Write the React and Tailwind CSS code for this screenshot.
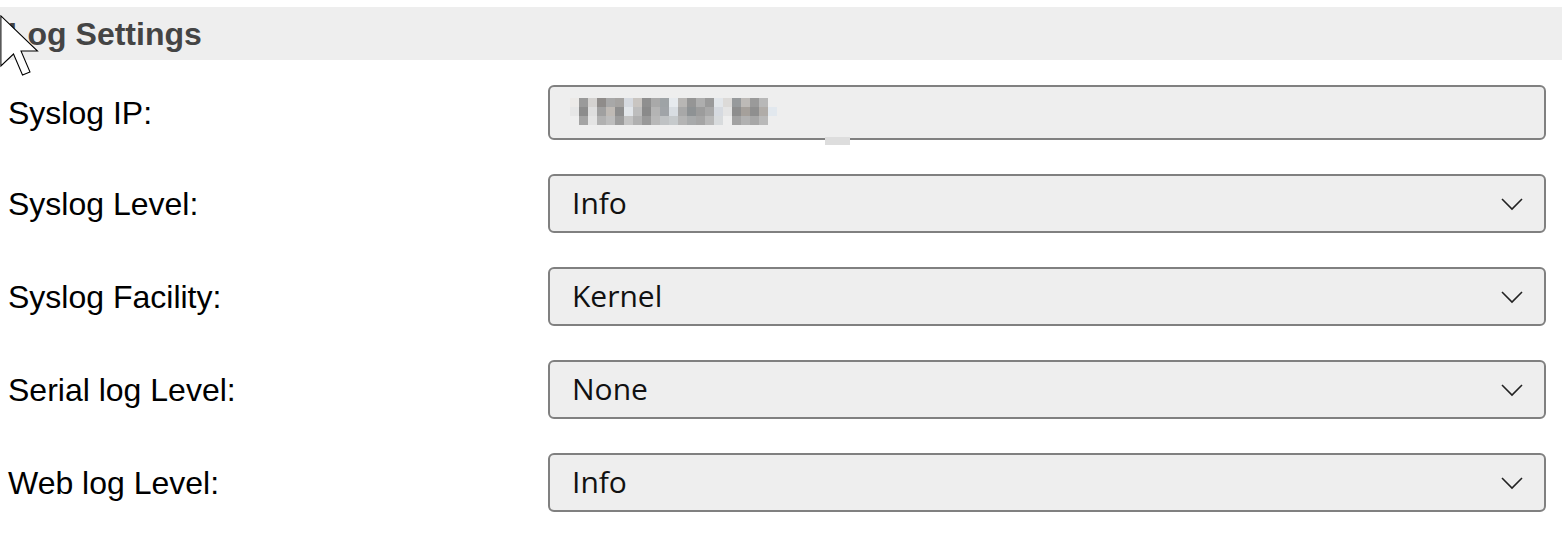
import { useState } from 'react';

const rows = [
  { label: 'Syslog Level:', value: 'Info', options: ['None', 'Error', 'Warning', 'Info', 'Debug'] },
  { label: 'Syslog Facility:', value: 'Kernel', options: ['Kernel', 'User', 'Daemon', 'Local0'] },
  { label: 'Serial log Level:', value: 'None', options: ['None', 'Error', 'Warning', 'Info', 'Debug'] },
  { label: 'Web log Level:', value: 'Info', options: ['None', 'Error', 'Warning', 'Info', 'Debug'] },
];

// pixelated (blurred) ip address
const shades = [
  ['#eceae8', '#9a9a9a', '#d4d2d0', '#8f8c8a', '#a8a8a8', '#a5a3a1', '#d6dae0', '#c9c5c1', '#8f8f8f', '#a9a9a9', '#9ea3a6', '#e6eaee', '#b8b6b4', '#959595', '#aeaeae', '#9a9a9a', '#e2e6ea', '#dcdad8', '#979a9c', '#bdbab7', '#9a9a9a', '#b8b8b8', '#eeeeee'],
  ['#e6e6e6', '#8c8c8c', '#dedede', '#a0a0a0', '#bfbab5', '#8e8e8e', '#e2e6ea', '#bdbdbd', '#8a8a8a', '#b4b4b4', '#a0a4a8', '#d8dde2', '#a8a8a8', '#8e9294', '#9c9c9c', '#a8a8a8', '#d6dae0', '#e4e4e4', '#8e8e8e', '#a5a09b', '#8f8f8f', '#b0aca8', '#e2e8ee'],
  ['#eeeeee', '#a4a4a4', '#e4e4e4', '#b1b1b1', '#bdbdbd', '#9c9c9c', '#c4c4c4', '#b0b0b0', '#999999', '#b8b8b8', '#bfc2c4', '#c6cacc', '#b4b4b4', '#a8aaab', '#a5a5a5', '#b8b8b8', '#d8dbdd', '#eeeeee', '#a2a2a2', '#b1b1b1', '#a7a7a7', '#b9b9b9', '#eeeeee'],
];

function Chevron() {
  return (
    <svg width="22" height="14" viewBox="0 0 22 14" className="pointer-events-none absolute right-[23px] top-1/2 -translate-y-1/2">
      <path d="M1 2 L11 12 L21 2" fill="none" stroke="#222" strokeWidth="1.6" />
    </svg>
  );
}

export default function App() {
  const [values, setValues] = useState(rows.map(r => r.value));

  return (
    <div className="relative w-[1562px] h-[533px] bg-white overflow-hidden" style={{ fontFamily: '"Liberation Sans", Arial, sans-serif' }}>
      <div className="mt-[7px] h-[53px] bg-[#eeeeee] flex items-center pl-[8px]">
        <h2 className="text-[32px] font-bold text-[#444444] leading-none">Log Settings</h2>
      </div>

      <div className="flex flex-col gap-[34px] mt-[25px] pr-[16px]">
        <div className="flex items-center">
          <label className="w-[548px] pl-[8px] text-[32px] text-black pt-[1px]">Syslog IP:</label>
          <div className="relative flex-1 h-[55px] rounded-[6px] border-2 border-[#808080] bg-[#eeeeee] flex items-center pl-[20px]">
            <svg width="210" height="27" viewBox="0 0 210 27" className="mt-[-2px]">
              {shades.map((row, y) => row.map((c, x) => (
                <rect key={x + '-' + y} x={x * 9} y={y * 9} width="9" height="9" fill={c} />
              )))}
            </svg>
            <div className="absolute left-[275px] bottom-[-7px] w-[25px] h-[8px] bg-[#dddddd]" />
          </div>
        </div>

        {rows.map((r, i) => (
          <div key={r.label} className="flex items-center">
            <label className="w-[548px] pl-[8px] text-[32px] text-black pt-[1px]">{r.label}</label>
            <div className="relative flex-1">
              <select
                value={values[i]}
                onChange={e => setValues(values.map((v, j) => (j === i ? e.target.value : v)))}
                className="appearance-none w-full h-[59px] rounded-[6px] border-2 border-[#808080] bg-[#eeeeee] pl-[22px] pb-[3px] text-[30px] text-[#111] outline-none"
                style={{ fontFamily: '"Open Sans", "Noto Sans", sans-serif' }}
              >
                {r.options.map(o => <option key={o}>{o}</option>)}
              </select>
              <Chevron />
            </div>
          </div>
        ))}
      </div>

      {/* mouse cursor */}
      <svg width="42" height="66" viewBox="0 0 14 22" className="absolute left-0 top-[15px]">
        <path d="M0.3 0.3 L0.3 17 L4.5 13 L7.5 20 L10 19 L7 12 L12.5 12 Z" fill="white" stroke="black" strokeWidth="0.35" strokeLinejoin="miter" />
      </svg>
    </div>
  );
}
